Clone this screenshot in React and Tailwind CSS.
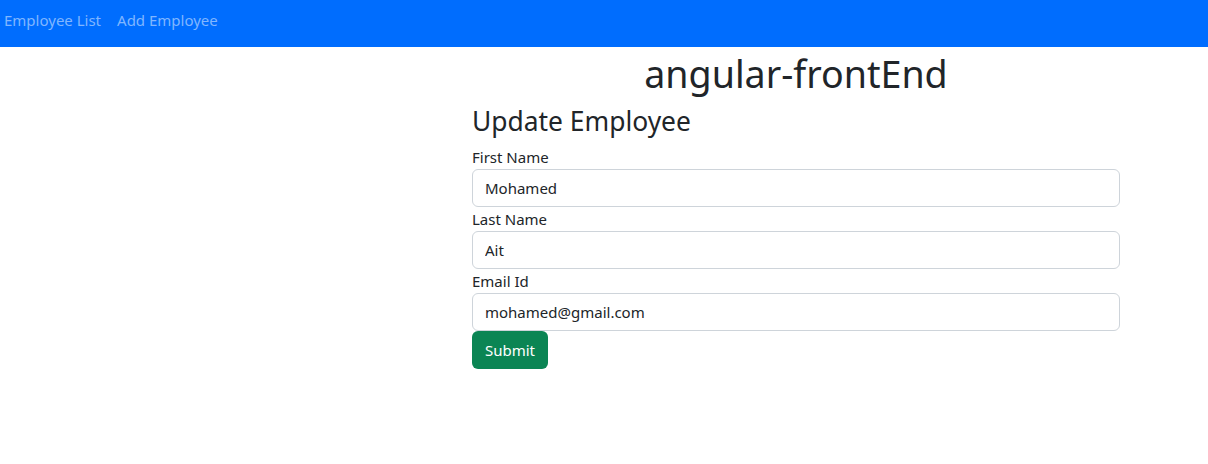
import React from "react";

export default function App() {
  const font = { fontFamily: '"Noto Sans", "Liberation Sans", sans-serif' };
  return (
    <div className="min-h-[464px] bg-white text-[#212529]" style={font}>
      <nav className="h-[47px] bg-[#006dfe] flex items-start pt-[8px] px-1 gap-4 text-[15px] text-[#80b6ff]">
        <a className="leading-6">Employee List</a>
        <a className="leading-6">Add Employee</a>
      </nav>
      <div className="ml-[472px] w-[648px]">
        <h1 className="text-center text-[37.6px] leading-[48px] mt-[3px] mb-0">angular-frontEnd</h1>
        <h2 className="text-[26.4px] leading-[38px] mb-[5px] mt-[4px]">Update Employee</h2>
        <form className="flex flex-col">
          <label className="text-[15px] leading-6">First Name</label>
          <input readOnly value="Mohamed" className="h-[38px] border border-[#ced4da] rounded-[6px] px-3 text-[15px] outline-none" />
          <label className="text-[15px] leading-6">Last Name</label>
          <input readOnly value="Ait" className="h-[38px] border border-[#ced4da] rounded-[6px] px-3 text-[15px] outline-none" />
          <label className="text-[15px] leading-6">Email Id</label>
          <input readOnly value="mohamed@gmail.com" className="h-[38px] border border-[#ced4da] rounded-[6px] px-3 text-[15px] outline-none" />
          <div>
            <button type="button" className="h-[38px] w-[76px] rounded-[6px] bg-[#0b8554] text-white text-[15px]">Submit</button>
          </div>
        </form>
      </div>
    </div>
  );
}
